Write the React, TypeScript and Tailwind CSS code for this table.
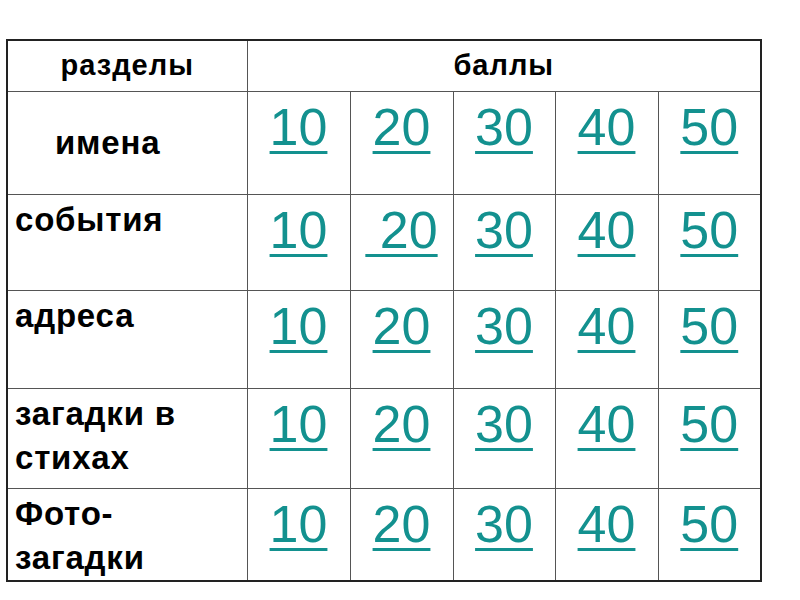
import React from 'react';

type Row = {
  label: React.ReactNode;
  height: string;
  centered?: boolean;
  scores: string[];
};

const rows: Row[] = [
  { label: 'имена', height: 'h-[103px]', centered: true, scores: ['10', '20', '30', '40', '50'] },
  { label: 'события', height: 'h-[96px]', scores: ['10', '\u00a020', '30', '40', '50'] },
  { label: 'адреса', height: 'h-[98px]', scores: ['10', '20', '30', '40', '50'] },
  {
    label: (
      <>
        загадки в<br />
        стихах
      </>
    ),
    height: 'h-[100px]',
    scores: ['10', '20', '30', '40', '50'],
  },
  {
    label: (
      <>
        Фото-
        <br />
        загадки
      </>
    ),
    height: 'h-[93px]',
    scores: ['10', '20', '30', '40', '50'],
  },
];

const cell = 'border border-[#555]';

export default function App() {
  return (
    <div
      className="w-[800px] h-[600px] bg-white pt-[39px] pl-[6px]"
      style={{ fontFamily: '"Liberation Sans", Arial, sans-serif' }}
    >
      <table className="table-fixed border-collapse border-2 border-[#222] w-[754px]">
        <colgroup>
          <col className="w-[240px]" />
          <col className="w-[103px]" />
          <col className="w-[103px]" />
          <col className="w-[102px]" />
          <col className="w-[103px]" />
          <col className="w-[103px]" />
        </colgroup>
        <thead>
          <tr className="h-[51px]">
            <th className={`${cell} text-[29px] font-bold text-black text-center align-middle tracking-[1px]`}>
              разделы
            </th>
            <th colSpan={5} className={`${cell} text-[29px] font-bold text-black text-center align-middle tracking-[1px]`}>
              баллы
            </th>
          </tr>
        </thead>
        <tbody>
          {rows.map((row, i) => (
            <tr key={i} className={row.height}>
              <td
                className={`${cell} text-[33px] font-bold text-black leading-[44px] tracking-[0.8px] ${
                  row.centered ? 'align-middle pl-[47px]' : 'align-top pt-[3px] pl-[7px]'
                }`}
              >
                {row.label}
              </td>
              {row.scores.map((s, j) => (
                <td key={j} className={`${cell} align-top text-center pt-[9px]`}>
                  <a
                    href="#"
                    className="text-[52px] leading-none text-[#13918f] underline underline-offset-[6px] decoration-[3px]"
                  >
                    {s}
                  </a>
                </td>
              ))}
            </tr>
          ))}
        </tbody>
      </table>
    </div>
  );
}
